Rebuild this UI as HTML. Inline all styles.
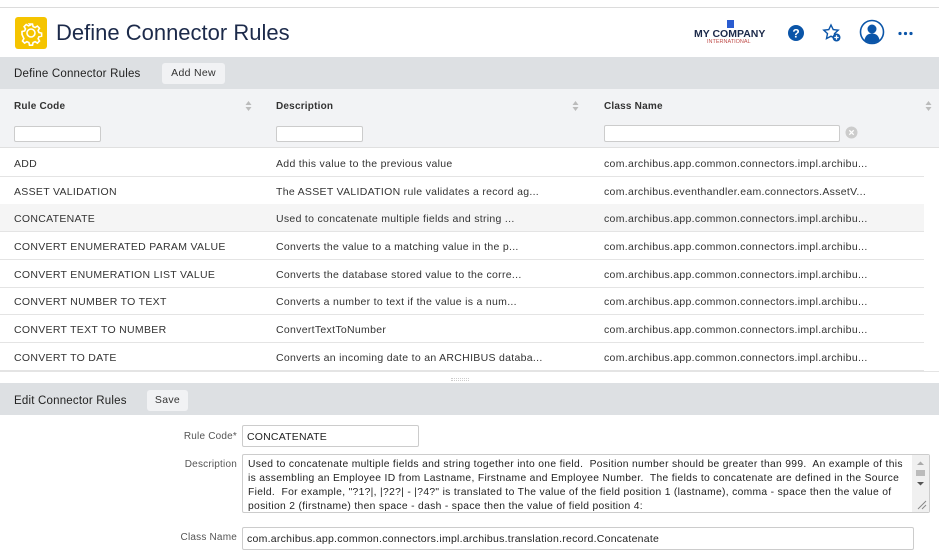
<!DOCTYPE html>
<html><head><meta charset="utf-8"><style>
*{box-sizing:border-box;margin:0;padding:0}
body{width:939px;height:556px;overflow:hidden;background:#fff;font-family:"Liberation Sans","DejaVu Sans",sans-serif;font-size:10.5px;color:#333;position:relative}
.abs{position:absolute}
.topline{left:0;top:7px;width:939px;height:1px;background:#dcdcdc}
.logo{left:15px;top:17px;width:32px;height:32px;background:#f5c400;border-radius:3px}
.title{left:56px;top:20px;font-size:22px;color:#1c2a4a}
.bar{left:0;width:939px;height:32px;background:#dde0e3}
.bar .t{position:absolute;left:14px;top:11px;font-size:11.5px;color:#222;letter-spacing:0.2px}
.btn{position:absolute;background:#f1f2f4;border-radius:3px;font-size:10.5px;color:#333;text-align:center;line-height:20px;height:21px;letter-spacing:0.3px}
.hdr{left:0;top:89px;width:939px;height:59px;background:#f2f3f5;border-bottom:1px solid #e0e0e0}
.hdr .h{position:absolute;top:12px;font-size:10px;font-weight:bold;color:#333;letter-spacing:0.2px}
.inp{position:absolute;background:#fff;border:1px solid #ccc;border-radius:2px;height:16px}
.sort{position:absolute;top:11px;width:7px;height:12px}
.row{position:absolute;left:0;width:924px;height:28px;border-bottom:1px solid #e4e4e4;font-size:10.5px;color:#333;letter-spacing:0.3px}
.row span{position:absolute;top:9px;white-space:nowrap}
.lbl{position:absolute;font-size:10px;color:#555;text-align:right;width:100px;letter-spacing:0.2px}
.fi{position:absolute;border:1px solid #ccc;border-radius:2px;background:#fff;font-size:10.5px;color:#222;padding:5px 4px;white-space:nowrap}
</style></head><body>
<div class="abs topline"></div>
<div class="abs logo"><svg width="32" height="32" viewBox="0 0 32 32"><g fill="none" stroke="#fff" stroke-width="1.6"><circle cx="16" cy="16" r="4"/><path d="M14.5 7h3l.6 2.6 2 .9 2.3-1.4 2.1 2.1-1.4 2.3.9 2 2.6.6v3l-2.6.6-.9 2 1.4 2.3-2.1 2.1-2.3-1.4-2 .9-.6 2.6h-3l-.6-2.6-2-.9-2.3 1.4-2.1-2.1 1.4-2.3-.9-2L7 17.5v-3l2.6-.6.9-2-1.4-2.3 2.1-2.1 2.3 1.4 2-.9z"/></g></svg></div>
<div class="abs title">Define Connector Rules</div>
<div class="abs" style="left:694px;top:28px;font-size:10.5px;font-weight:bold;color:#1c2a4a;letter-spacing:0px">MY COMPANY</div>
<div class="abs" style="left:707px;top:39px;font-size:5.5px;color:#c0504d">INTERNATIONAL</div>
<div class="abs" style="left:727px;top:20px;width:7px;height:8px;background:#2a5cd0"></div>
<svg class="abs" style="left:787px;top:24px" width="18" height="18"><circle cx="9" cy="9" r="8" fill="#0b55a8"/><text x="9" y="13.5" font-size="12" font-weight="bold" fill="#fff" text-anchor="middle" font-family="Liberation Sans">?</text></svg>
<svg class="abs" style="left:822px;top:23px" width="20" height="20" viewBox="0 0 20 20"><path d="M9 2l2.2 4.6 5 .6-3.7 3.4 1 5L9 13.2 4.5 15.6l1-5L1.8 7.2l5-.6z" fill="none" stroke="#0b55a8" stroke-width="1.4"/><circle cx="14.5" cy="14.5" r="4" fill="#0b55a8"/><path d="M14.5 12.3v4.4M12.3 14.5h4.4" stroke="#fff" stroke-width="1.3"/></svg>
<svg class="abs" style="left:859px;top:19px" width="26" height="26" viewBox="0 0 26 26"><circle cx="13" cy="13" r="11.5" fill="#fff" stroke="#0b55a8" stroke-width="1.6"/><circle cx="13" cy="10" r="4.5" fill="#0b55a8"/><path d="M5.5 21c1-5 4-6.5 7.5-6.5s6.5 1.5 7.5 6.5a11 11 0 0 1-15 0z" fill="#0b55a8"/></svg>
<svg class="abs" style="left:898px;top:31px" width="16" height="5"><circle cx="2" cy="2.5" r="1.6" fill="#0b55a8"/><circle cx="7.5" cy="2.5" r="1.6" fill="#0b55a8"/><circle cx="13" cy="2.5" r="1.6" fill="#0b55a8"/></svg>

<div class="abs bar" style="top:57px"><div class="t">Define Connector Rules</div><div class="btn" style="left:162px;top:6px;width:63px">Add New</div></div>
<div class="abs hdr">
<div class="h" style="left:14px">Rule Code</div>
<div class="h" style="left:276px">Description</div>
<div class="h" style="left:604px">Class Name</div>
<svg class="sort" style="left:245px"><path d="M0.5 5L3.5 1 6.5 5zM0.5 7l3 4 3-4z" fill="#bbb"/></svg>
<svg class="sort" style="left:572px"><path d="M0.5 5L3.5 1 6.5 5zM0.5 7l3 4 3-4z" fill="#bbb"/></svg>
<svg class="sort" style="left:925px"><path d="M0.5 5L3.5 1 6.5 5zM0.5 7l3 4 3-4z" fill="#bbb"/></svg>
<div class="inp" style="left:14px;top:37px;width:87px"></div>
<div class="inp" style="left:276px;top:37px;width:87px"></div>
<div class="inp" style="left:604px;top:36px;width:236px;height:17px"></div>
<svg class="abs" style="left:845px;top:37px" width="13" height="13"><circle cx="6.5" cy="6.5" r="6" fill="#ccc"/><path d="M4.3 4.3l4.4 4.4M8.7 4.3l-4.4 4.4" stroke="#fff" stroke-width="1.3"/></svg>
</div>

<div class="row" style="top:149px"><span style="left:14px">ADD</span><span style="left:276px">Add this value to the previous value</span><span style="left:604px">com.archibus.app.common.connectors.impl.archibu...</span></div>
<div class="row" style="top:177px"><span style="left:14px">ASSET VALIDATION</span><span style="left:276px">The ASSET VALIDATION rule validates a record ag...</span><span style="left:604px">com.archibus.eventhandler.eam.connectors.AssetV...</span></div>
<div class="row" style="top:204px;background:#f5f5f5"><span style="left:14px">CONCATENATE</span><span style="left:276px">Used to concatenate multiple fields and string ...</span><span style="left:604px">com.archibus.app.common.connectors.impl.archibu...</span></div>
<div class="row" style="top:232px"><span style="left:14px">CONVERT ENUMERATED PARAM VALUE</span><span style="left:276px">Converts the value to a matching value in the p...</span><span style="left:604px">com.archibus.app.common.connectors.impl.archibu...</span></div>
<div class="row" style="top:260px"><span style="left:14px">CONVERT ENUMERATION LIST VALUE</span><span style="left:276px">Converts the database stored value to the corre...</span><span style="left:604px">com.archibus.app.common.connectors.impl.archibu...</span></div>
<div class="row" style="top:287px"><span style="left:14px">CONVERT NUMBER TO TEXT</span><span style="left:276px">Converts a number to text if the value is a num...</span><span style="left:604px">com.archibus.app.common.connectors.impl.archibu...</span></div>
<div class="row" style="top:315px"><span style="left:14px">CONVERT TEXT TO NUMBER</span><span style="left:276px">ConvertTextToNumber</span><span style="left:604px">com.archibus.app.common.connectors.impl.archibu...</span></div>
<div class="row" style="top:343px"><span style="left:14px">CONVERT TO DATE</span><span style="left:276px">Converts an incoming date to an ARCHIBUS databa...</span><span style="left:604px">com.archibus.app.common.connectors.impl.archibu...</span></div>
<div class="abs" style="left:0;top:371px;width:939px;height:1px;background:#e4e4e4"></div>
<div class="abs" style="left:451px;top:378px;width:18px;height:3px;border-top:1px dotted #ccc;border-bottom:1px dotted #ccc"></div>

<div class="abs bar" style="top:383px"><div class="t" style="top:12px">Edit Connector Rules</div><div class="btn" style="left:147px;top:7px;width:41px">Save</div></div>

<div class="lbl" style="left:137px;top:431px">Rule Code*</div>
<div class="fi" style="left:242px;top:425px;width:177px;height:22px;letter-spacing:0.2px">CONCATENATE</div>
<div class="lbl" style="left:137px;top:459px">Description</div>
<div class="fi" style="left:242px;top:454px;width:688px;height:59px;line-height:14px;padding:3px 20px 3px 5px;overflow:hidden;font-size:10.3px;letter-spacing:0.32px">Used to concatenate multiple fields and string together into one field.&nbsp; Position number should be greater than 999.&nbsp; An example of this<br>is assembling an Employee ID from Lastname, Firstname and Employee Number.&nbsp; The fields to concatenate are defined in the Source<br>Field.&nbsp; For example, "?1?|, |?2?| - |?4?" is translated to The value of the field position 1 (lastname), comma - space then the value of<br>position 2 (firstname) then space - dash - space then the value of field position 4:</div>
<div class="abs" style="left:912px;top:455px;width:17px;height:57px;background:#f0f0f0"></div>
<svg class="abs" style="left:913px;top:457px" width="15" height="54"><path d="M4 8l3.5-3.5L11 8z" fill="#aaa"/><rect x="3" y="13" width="9" height="6" fill="#bbb"/><path d="M4 25l3.5 3.5L11 25z" fill="#555"/><path d="M13 44l-8 8M13 48l-4 4" stroke="#888"/></svg>
<div class="lbl" style="left:137px;top:532px">Class Name</div>
<div class="fi" style="left:242px;top:527px;width:672px;height:23px;letter-spacing:0.26px">com.archibus.app.common.connectors.impl.archibus.translation.record.Concatenate</div>
</body></html>
